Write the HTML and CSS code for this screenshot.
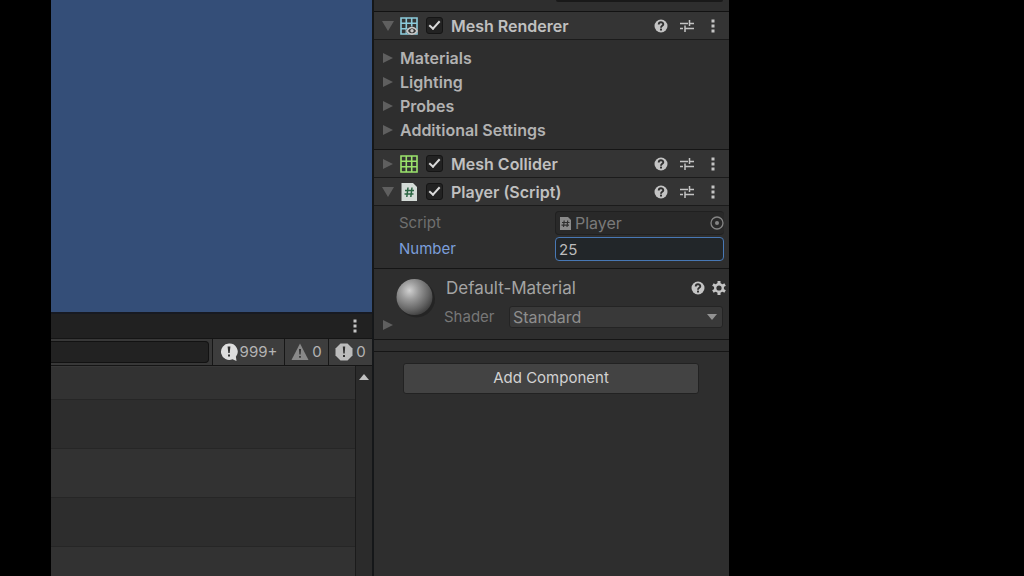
FILE: index.html
```html
<!DOCTYPE html>
<html lang="en">
<head>
  <meta charset="UTF-8" />
  <meta name="viewport" content="width=device-width, initial-scale=1" />
  <title>Inspector - Player</title>
  <link rel="stylesheet" href="styles.css">
</head>
<body>

  <!-- Shared icons -->
  <svg class="sprite" aria-hidden="true">
    <symbol id="help" viewBox="0 0 14 14">
      <circle cx="7" cy="7" r="6.5" fill="#c4c4c4" />
      <path d="M4.700 5.600c0-3.200 4.600-3 4.600-.3 0 1.600-2.300 1.500-2.300 3.400" fill="none" stroke="#303030" stroke-width="1.900" />
      <rect x="6" y="9.600" width="2" height="1.900" fill="#303030" />
    </symbol>
    <symbol id="preset" viewBox="0 0 14 14">
      <path d="M0 4.500h8M9.500 4.500H14M9.500 1v6M0 9.500h3M5 9.500h9M5 6.500v6.500" fill="none" stroke="#c4c4c4" stroke-width="1.500" />
    </symbol>
    <symbol id="dots" viewBox="0 0 4 14">
      <path d="M.5.500h3v3h-3zM.5 5.500h3v3h-3zM.5 10.500h3v3h-3z" fill="#c4c4c4" />
    </symbol>
    <symbol id="fold-open" viewBox="0 0 12 12">
      <path d="M0 1h12L6 11z" fill="#5f5f5f" />
    </symbol>
    <symbol id="fold-closed" viewBox="0 0 12 12">
      <path d="M1 1v10l10-5z" fill="#5f5f5f" />
    </symbol>
  </svg>

  <div class="editor">
    <main class="left">
      <div class="game-view"></div>

      <section class="console" aria-label="Console">
        <div class="console-tabs">
          <button class="icon-btn" aria-label="Console menu"><svg class="dots"><use href="#dots" /></svg></button>
        </div>
        <div class="console-bar">
          <input class="search" type="text" aria-label="Search console">
          <button class="count count-log">
            <svg viewBox="0 0 18 18">
              <path d="M9 .5a8.200 8.200 0 1 0 3.500 15.700L16.500 18l-.6-4.200A8.200 8.200 0 0 0 9 .5z" fill="#dedede" />
              <path d="M7.600 3.500h2.800L9.700 10H8.300zM8 11.500h2v2H8z" fill="#303030" />
            </svg>999+
          </button>
          <button class="count">
            <svg viewBox="0 0 18 18">
              <path d="M9 .5L17.500 17H.5z" fill="#898989" />
              <path d="M8 6h2l-.4 5.500H8.400zM8.200 13h1.600v1.800H8.200z" fill="#303030" />
            </svg>0
          </button>
          <button class="count">
            <svg viewBox="0 0 18 18">
              <path d="M5.500.5h7l5 5v7l-5 5h-7l-5-5v-7z" fill="#bcbcbc" />
              <path d="M7.800 3.500h2.400L9.700 10.500H8.300zM8 12h2v2H8z" fill="#303030" />
            </svg>0
          </button>
        </div>
        <div class="log">
          <div class="log-rows">
            <div class="log-row first"></div>
            <div class="log-row"></div>
            <div class="log-row"></div>
            <div class="log-row"></div>
            <div class="log-row"></div>
          </div>
          <div class="scrollbar">
            <svg viewBox="0 0 10 6"><path d="M5 0l5 6H0z" fill="#c0c0c0" /></svg>
          </div>
        </div>
      </section>
    </main>

    <aside class="inspector" aria-label="Inspector">
      <div class="previous"><div class="previous-field"></div></div>

      <!-- Mesh Renderer -->
      <header class="component">
        <svg class="fold"><use href="#fold-open" /></svg>
        <svg class="kind" viewBox="0 0 18 18">
          <path d="M1 1h16v16H1zM6.300 1v16M11.700 1v16M1 6.300h16M1 11.700h16" fill="none" stroke="#8ccbdc" stroke-width="1.600" />
          <path d="M5.500 14c3.500-6 9.500-6 12.500 0-3 5.300-9 5.300-12.500 0z" fill="#343434" />
          <path d="M6.800 14c2.800-4.600 7.600-4.600 10.400 0-2.800 4.200-7.600 4.200-10.400 0z" fill="#343434" stroke="#c8c8c8" stroke-width="1.600" />
          <circle cx="12" cy="13.800" r="1.700" fill="#c8c8c8" />
        </svg>
        <input class="tick" type="checkbox" id="renderer-on" checked>
        <label class="title" for="renderer-on">Mesh Renderer</label>
        <button class="icon-btn" aria-label="Help"><svg><use href="#help" /></svg></button>
        <button class="icon-btn" aria-label="Presets"><svg><use href="#preset" /></svg></button>
        <button class="icon-btn" aria-label="More"><svg class="dots"><use href="#dots" /></svg></button>
      </header>
      <div class="foldouts">
        <div class="foldout"><svg class="fold"><use href="#fold-closed" /></svg>Materials</div>
        <div class="foldout"><svg class="fold"><use href="#fold-closed" /></svg>Lighting</div>
        <div class="foldout"><svg class="fold"><use href="#fold-closed" /></svg>Probes</div>
        <div class="foldout"><svg class="fold"><use href="#fold-closed" /></svg>Additional Settings</div>
      </div>

      <!-- Mesh Collider -->
      <header class="component">
        <svg class="fold"><use href="#fold-closed" /></svg>
        <svg class="kind" viewBox="0 0 18 18">
          <path d="M1 1h16v16H1zM6.300 1v16M11.700 1v16M1 6.300h16M1 11.700h16" fill="none" stroke="#9be36c" stroke-width="1.600" />
        </svg>
        <input class="tick" type="checkbox" id="collider-on" checked>
        <label class="title" for="collider-on">Mesh Collider</label>
        <button class="icon-btn" aria-label="Help"><svg><use href="#help" /></svg></button>
        <button class="icon-btn" aria-label="Presets"><svg><use href="#preset" /></svg></button>
        <button class="icon-btn" aria-label="More"><svg class="dots"><use href="#dots" /></svg></button>
      </header>

      <!-- Player (Script) -->
      <header class="component">
        <svg class="fold"><use href="#fold-open" /></svg>
        <svg class="kind" viewBox="0 0 18 18">
          <path d="M1.500 0H13l4 4v14H1.500z" fill="#d5dcd8" />
          <path d="M8 4.500L6.800 14M12 4.500L10.800 14M5 7.500h9M4.500 11h9" fill="none" stroke="#2c6644" stroke-width="1.500" />
        </svg>
        <input class="tick" type="checkbox" id="player-on" checked>
        <label class="title" for="player-on">Player (Script)</label>
        <button class="icon-btn" aria-label="Help"><svg><use href="#help" /></svg></button>
        <button class="icon-btn" aria-label="Presets"><svg><use href="#preset" /></svg></button>
        <button class="icon-btn" aria-label="More"><svg class="dots"><use href="#dots" /></svg></button>
      </header>
      <div class="fields">
        <div class="field">
          <label class="dim" for="script">Script</label>
          <div class="box object-box">
            <svg class="file" viewBox="0 0 11 13">
              <path d="M0 0h8l3 3v10H0z" fill="#8a8a8a" />
              <path d="M4.200 3.500l-.7 6.500M7.700 3.500L7 10M2 5.500h7.500M1.500 8.200H9" fill="none" stroke="#303030" stroke-width="1.200" />
            </svg>
            <input id="script" type="text" value="Player" disabled>
            <svg class="picker" viewBox="0 0 14 14">
              <circle cx="7" cy="7" r="6" fill="none" stroke="#858585" stroke-width="1.300" />
              <circle cx="7" cy="7" r="2" fill="#858585" />
            </svg>
          </div>
        </div>
        <div class="field">
          <label class="active" for="number">Number</label>
          <input class="box number" id="number" type="text" value="25">
        </div>
      </div>

      <!-- Material preview -->
      <section class="material">
        <div class="preview">
          <svg class="ball" viewBox="0 0 40 40">
            <defs>
              <radialGradient id="shine" cx=".36" cy=".32" r=".72">
                <stop offset="0" stop-color="#d0d0d0" />
                <stop offset=".35" stop-color="#9a9a9a" />
                <stop offset=".75" stop-color="#656565" />
                <stop offset="1" stop-color="#404040" />
              </radialGradient>
            </defs>
            <circle cx="20.500" cy="21" r="18.500" fill="#242424" />
            <circle cx="18.500" cy="19" r="18" fill="url(#shine)" />
          </svg>
          <svg class="fold"><use href="#fold-closed" /></svg>
        </div>
        <div class="material-info">
          <div class="material-head">
            <h2>Default-Material</h2>
            <button class="icon-btn" aria-label="Help"><svg><use href="#help" /></svg></button>
            <button class="icon-btn" aria-label="Settings">
              <svg viewBox="0 0 14 14">
                <path d="M7 0v14M.9 3.500l12.200 7M.9 10.500l12.200-7" stroke="#c4c4c4" stroke-width="3" />
                <circle cx="7" cy="7" r="5" fill="#c4c4c4" />
                <circle cx="7" cy="7" r="2.600" fill="#303030" />
              </svg>
            </button>
          </div>
          <div class="shader">
            <label for="shader">Shader</label>
            <div class="select-wrap">
              <select id="shader"><option>Standard</option></select>
              <svg class="arrow" viewBox="0 0 10 6"><path d="M0 0h10L5 6z" fill="#929292" /></svg>
            </div>
          </div>
        </div>
      </section>
      <div class="strip"></div>

      <div class="add">
        <button class="add-btn">Add Component</button>
      </div>
    </aside>
  </div>

</body>
</html>
```
FILE: styles.css
```css
*, *::before, *::after {
  box-sizing: border-box;
}
body {
  margin: 0;
  background: #000;
  color: #c4c4c4;
  font-family: Inter, "Liberation Sans", sans-serif;
  font-size: 16px;
  line-height: 20px;
}
button, input, select {
  font: inherit;
  color: inherit;
  margin: 0;
}
svg {
  display: block;
  flex: none;
}
.sprite {
  position: absolute;
  width: 0;
  height: 0;
}
.editor {
  display: flex;
  min-height: 100vh;
  margin: 0 295px 0 51px;
}

/* Game view and console */
.left {
  flex: 1;
  display: flex;
  flex-direction: column;
  min-width: 0;
  background: #2d2d2d;
}
.game-view {
  height: 312px;
  background: #344e78;
}
.console {
  flex: 1;
  display: flex;
  flex-direction: column;
}
.console-tabs {
  display: flex;
  justify-content: flex-end;
  align-items: center;
  height: 27px;
  padding: 0 15px 0 0;
  background: #212121;
  border-top: 2px solid #171a22;
  border-bottom: 1px solid #151515;
}
.console-bar {
  display: flex;
  align-items: center;
  height: 27px;
  background: #383838;
  border-bottom: 1px solid #151515;
}
.search {
  flex: 1;
  min-width: 0;
  height: 22px;
  margin-right: 3px;
  background: #222;
  border: 1px solid #121212;
  border-left: 0;
  border-radius: 0 4px 4px 0;
}
.count {
  display: flex;
  align-items: center;
  justify-content: center;
  gap: 3px;
  width: 44px;
  height: 26px;
  padding: 0;
  background: #3d3d3d;
  border: 0;
  border-left: 1px solid #171717;
  white-space: nowrap;
  font-size: 15px;
  color: #b4b4b4;
}
.count svg {
  width: 18px;
  height: 18px;
}
.count-log {
  width: 72px;
  gap: 2px;
}
.log {
  flex: 1;
  display: flex;
}
.log-rows {
  flex: 1;
}
.log-row {
  height: 49px;
  background: #2d2d2d;
  border-top: 1px solid #262626;
}
.log-row:nth-child(odd) {
  background: #323232;
}
.log-row.first {
  height: 33px;
  border-top-color: #383838;
}
.scrollbar {
  width: 17px;
  padding: 8px 3px;
  background: #2b2b2b;
  border-left: 1px solid #1b1b1b;
}
.scrollbar svg {
  width: 10px;
  height: 6px;
}

/* Inspector */
.inspector {
  width: 357px;
  background: #2e2e2e;
  border-left: 2px solid #151719;
}
.previous {
  height: 12px;
  padding: 0 6px 0 182px;
  border-bottom: 1px solid #121212;
}
.previous-field {
  height: 2px;
  background: #191919;
  border-radius: 0 0 3px 3px;
}
.component {
  display: flex;
  align-items: center;
  height: 28px;
  padding: 0 14px 0 8px;
  background: #343434;
  border-bottom: 1px solid #1b1b1b;
}
.fold {
  width: 12px;
  height: 12px;
}
.kind {
  width: 18px;
  height: 18px;
  margin: 0 8px 0 6px;
}
.tick {
  appearance: none;
  display: grid;
  place-items: center;
  width: 17px;
  height: 17px;
  background: #222;
  border: 1px solid #151515;
  border-radius: 3px;
}
.tick:checked::before {
  content: "";
  width: 11px;
  height: 6px;
  margin-bottom: 3px;
  border: solid #dadada;
  border-width: 0 0 2px 2px;
  transform: rotate(-48deg);
}
.title {
  flex: 1;
  margin-left: 8px;
  font-weight: 600;
  color: #c0c0c0;
}
.icon-btn {
  display: block;
  padding: 0;
  background: none;
  border: 0;
}
.icon-btn svg {
  width: 14px;
  height: 14px;
}
.icon-btn .dots {
  width: 4px;
}
.component .icon-btn + .icon-btn {
  margin-left: 12px;
}
.component .icon-btn:last-child {
  margin-left: 17px;
}
.foldouts {
  padding: 6px 8px 7px;
  border-bottom: 1px solid #151515;
}
.foldout {
  display: flex;
  align-items: center;
  gap: 6px;
  height: 24px;
  font-weight: 600;
  color: #b2b2b2;
}

/* Script fields */
.fields {
  display: flex;
  flex-direction: column;
  gap: 2px;
  padding: 5px 5px 7px 25px;
  border-bottom: 1px solid #151515;
}
.field {
  display: flex;
  align-items: center;
}
.field label {
  flex: 1;
  font-size: 15px;
}
.field .dim {
  color: #707070;
}
.field .active {
  color: #7c9fdc;
}
.box {
  width: 169px;
  height: 24px;
  border-radius: 4px;
}
.object-box {
  display: flex;
  align-items: center;
  padding: 0 0 0 4px;
  background: #292929;
  border: 1px solid #202020;
  border-right: 0;
}
.object-box input {
  flex: 1;
  min-width: 0;
  padding: 0 0 0 4px;
  background: none;
  border: 0;
  color: #7a7a7a;
}
.file {
  width: 11px;
  height: 13px;
}
.picker {
  width: 14px;
  height: 14px;
}
.number {
  padding: 0 3px;
  background: #222629;
  border: 1px solid #4878b5;
  outline: none;
  font-size: 15px;
  color: #bcbcbc;
}

/* Material */
.material {
  display: flex;
  gap: 8px;
  height: 71px;
  padding: 9px 3px 0 8px;
  border-bottom: 1px solid #151515;
}
.preview {
  width: 54px;
}
.ball {
  width: 40px;
  height: 40px;
  margin: 0 0 1px 14px;
}
.material-info {
  flex: 1;
  min-width: 0;
}
.material-head {
  display: flex;
  align-items: center;
  height: 20px;
}
.material-head h2 {
  flex: 1;
  margin: 0 0 0 2px;
  font-size: 17px;
  font-weight: 400;
  color: #a4a4a4;
}
.material-head .icon-btn + .icon-btn {
  margin-left: 7px;
}
.shader {
  display: flex;
  align-items: center;
  margin-top: 8px;
  padding-right: 3px;
}
.shader label {
  width: 65px;
  font-size: 15px;
  color: #777;
}
.select-wrap {
  position: relative;
  flex: 1;
}
.select-wrap select {
  appearance: none;
  display: block;
  width: 100%;
  height: 22px;
  padding: 0 3px;
  background: #393939;
  border: 1px solid #242424;
  border-radius: 3px;
  line-height: 20px;
  color: #8e8e8e;
}
.arrow {
  position: absolute;
  top: 8px;
  right: 6px;
  width: 10px;
  height: 6px;
  pointer-events: none;
}
.strip {
  height: 12px;
  border-bottom: 1px solid #151515;
}
.add {
  padding: 11px 30px 11px 29px;
}
.add-btn {
  display: block;
  width: 100%;
  height: 31px;
  padding: 0 0 2px;
  background: #434343;
  border: 1px solid #222;
  border-radius: 3px;
  font-size: 15px;
  color: #d2d2d2;
}
```
